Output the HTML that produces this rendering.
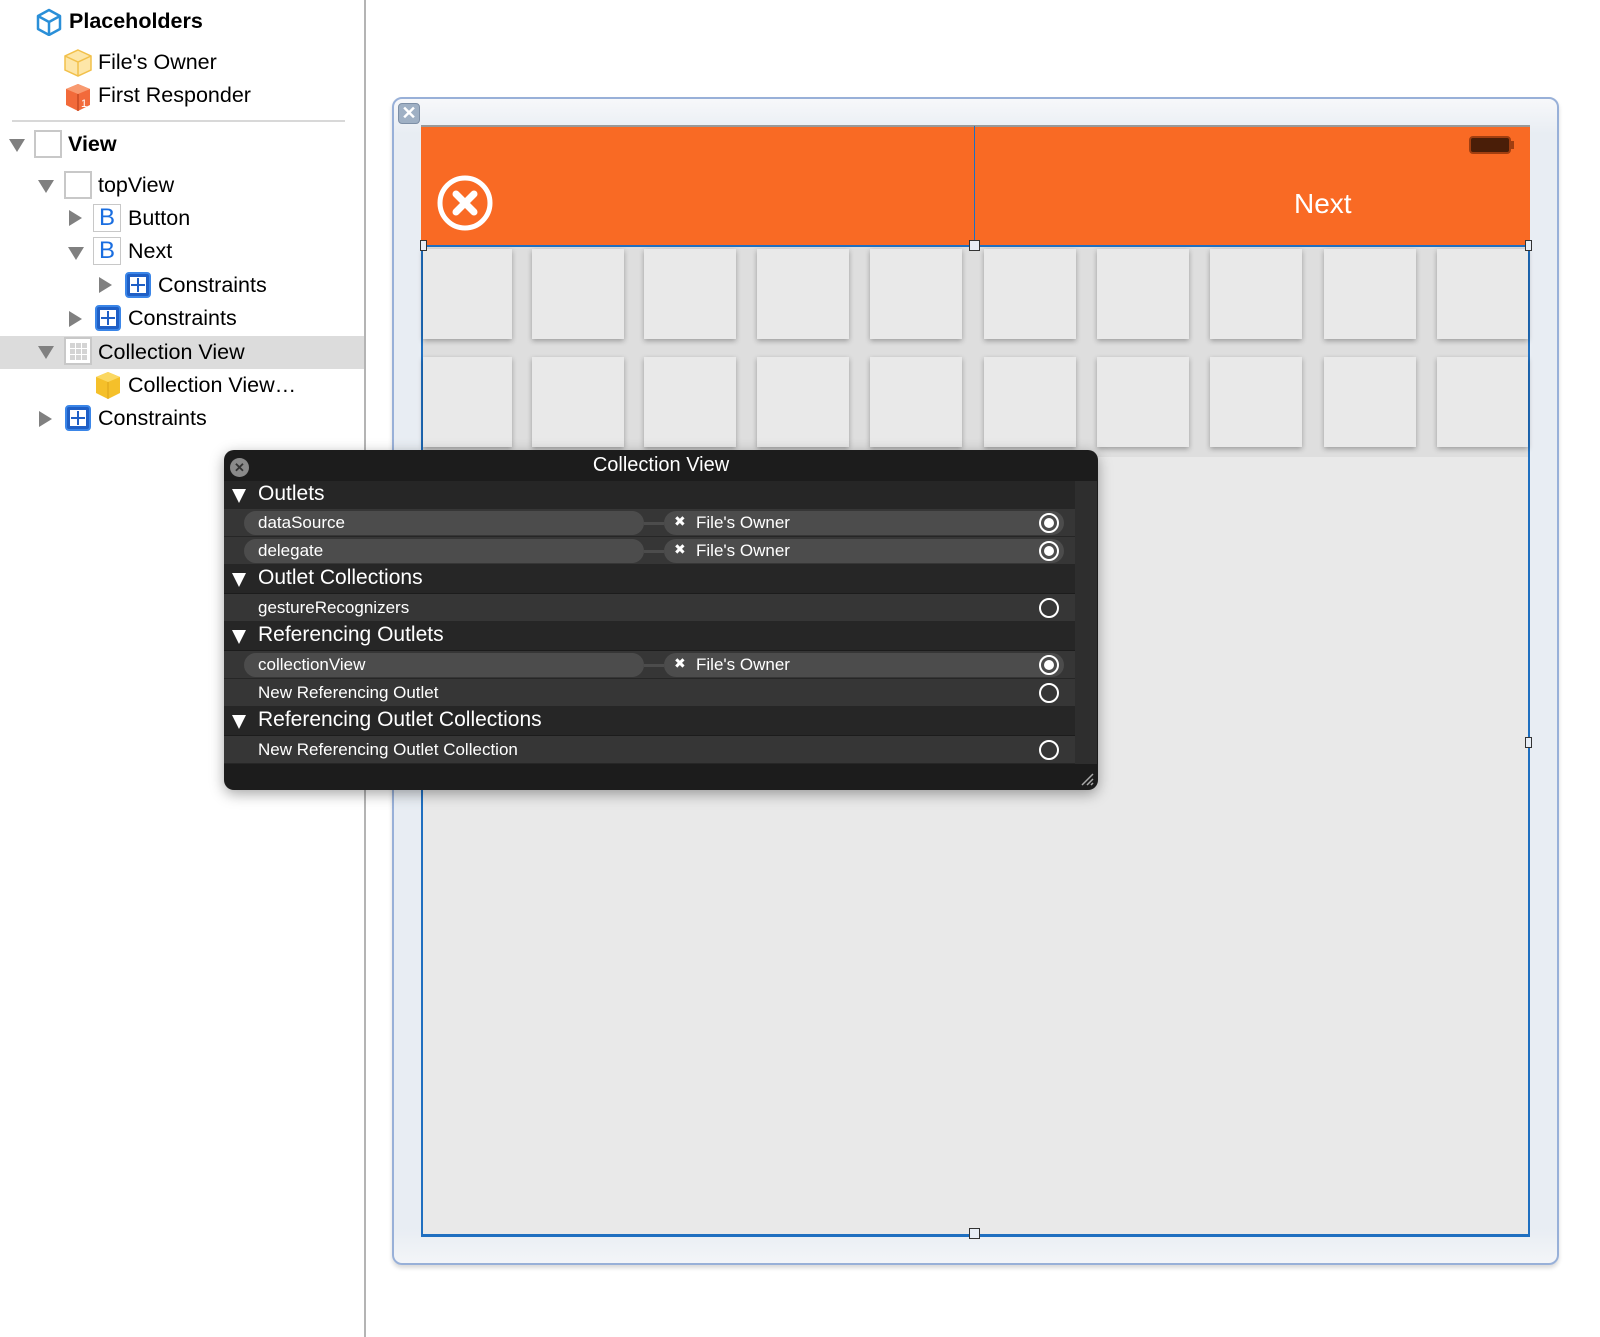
<!DOCTYPE html>
<html><head><meta charset="utf-8"><style>
*{margin:0;padding:0;box-sizing:border-box}
body{width:1600px;height:1337px;background:#fff;position:relative;overflow:hidden;font-family:"Liberation Sans",sans-serif;color:#000}
.a{position:absolute}
.side{font-size:21.5px;white-space:nowrap}
.tri{position:absolute;width:0;height:0}
.td{border-left:8px solid transparent;border-right:8px solid transparent;border-top:13px solid #808080}
.tr{border-top:8px solid transparent;border-bottom:8px solid transparent;border-left:13px solid #808080}
.box{position:absolute;width:28px;height:28px;border:2px solid #c8c8c8;background:#fff}
.bicon{position:absolute;width:28px;height:28px;border:1px solid #c8c8c8;background:#fff;color:#1a6ee0;font-size:24px;line-height:26px;text-align:center}
.cicon{position:absolute;width:26px;height:26px;border-radius:4px;background:#1f5fc6;border:2px solid #3b86e8}
.cicon::before{content:"";position:absolute;left:3px;top:3px;width:16px;height:16px;background:#fff}
.cicon::after{content:"";position:absolute;left:4px;top:4px;width:14px;height:14px;background:linear-gradient(90deg,transparent 6px,#1f5fc6 6px 8px,transparent 8px),linear-gradient(transparent 6px,#1f5fc6 6px 8px,transparent 8px)}
.cell{position:absolute;width:92px;height:90px;background:#e9e9e9;box-shadow:0 2px 5px rgba(0,0,0,.3)}
.pop{position:absolute;left:224px;top:450px;width:874px;height:340px;background:#1c1c1c;border-radius:10px;box-shadow:0 4px 14px rgba(0,0,0,.35);overflow:hidden;color:#fff;font-size:17px}
.row{position:absolute;left:0;width:851px;height:28px;background:#363636;border-bottom:1px solid #262626}
.hdr{position:absolute;left:0;width:851px;height:28px;background:#262626;font-size:21px}
.hdr span{position:absolute;left:34px;top:1px}
.hdr b{position:absolute;left:8px;top:8px;width:0;height:0;border-left:7px solid transparent;border-right:7px solid transparent;border-top:14px solid #fff}
.pill{position:absolute;top:2px;height:24px;border-radius:12px;background:#4c4c4c}
.lbl{position:absolute;left:34px;top:4px}
.circ{position:absolute;left:815px;top:4px;width:20px;height:20px;border-radius:50%;border:2px solid #fff}
.circ.f::after{content:"";position:absolute;left:3px;top:3px;width:10px;height:10px;border-radius:50%;background:#fff}
</style></head><body>
<!-- sidebar -->
<div class="a" style="left:364px;top:0;width:2px;height:1337px;background:#b4b4b4"></div>
<svg class="a" style="left:36px;top:8px" width="26" height="28" viewBox="0 0 26 28"><path d="M13 2 L24 8 L24 21 L13 27 L2 21 L2 8 Z M2 8 L13 14 L24 8 M13 14 L13 27" fill="none" stroke="#2a8fd8" stroke-width="2.5" stroke-linejoin="round"/></svg>
<div class="a side" style="left:69px;top:9px;font-weight:bold">Placeholders</div>
<svg class="a" style="left:63px;top:48px" width="30" height="30" viewBox="0 0 30 30"><path d="M15 2 L28 8 L28 22 L15 28 L2 22 L2 8 Z" fill="#fde6a8" stroke="#f2c04a" stroke-width="1.5"/><path d="M2 8 L15 14 L28 8 M15 14 L15 28" fill="none" stroke="#f2c04a" stroke-width="1.5"/></svg>
<div class="a side" style="left:98px;top:50px">File's Owner</div>
<svg class="a" style="left:64px;top:82px" width="28" height="30" viewBox="0 0 28 30"><path d="M14 2 L26 7 L26 23 L14 29 L2 23 L2 7 Z" fill="#f26a3a"/><path d="M2 7 L14 12 L26 7 L14 2 Z" fill="#f89a70"/><path d="M14 12 L14 29" stroke="#c84a22" stroke-width="1.5"/><text x="17" y="25" font-size="11" fill="#fff" font-family="Liberation Sans">1</text></svg>
<div class="a side" style="left:98px;top:83px">First Responder</div>
<div class="a" style="left:12px;top:120px;width:333px;height:2px;background:#d8d8d8"></div>
<div class="tri td" style="left:9px;top:139px"></div>
<div class="box" style="left:34px;top:130px"></div>
<div class="a side" style="left:68px;top:132px;font-weight:bold">View</div>
<div class="tri td" style="left:38px;top:180px"></div>
<div class="box" style="left:64px;top:171px"></div>
<div class="a side" style="left:98px;top:173px">topView</div>
<div class="tri tr" style="left:69px;top:210px"></div>
<div class="bicon" style="left:93px;top:204px">B</div>
<div class="a side" style="left:128px;top:206px">Button</div>
<div class="tri td" style="left:68px;top:247px"></div>
<div class="bicon" style="left:93px;top:237px">B</div>
<div class="a side" style="left:128px;top:239px">Next</div>
<div class="tri tr" style="left:99px;top:277px"></div>
<div class="cicon" style="left:125px;top:272px"></div>
<div class="a side" style="left:158px;top:273px">Constraints</div>
<div class="tri tr" style="left:69px;top:311px"></div>
<div class="cicon" style="left:95px;top:305px"></div>
<div class="a side" style="left:128px;top:306px">Constraints</div>
<div class="a" style="left:0;top:336px;width:364px;height:33px;background:#dcdcdc"></div>
<div class="tri td" style="left:38px;top:346px"></div>
<div class="box" style="left:64px;top:337px;background:#fff"><div class="a" style="left:4px;top:4px;width:17px;height:17px;background:linear-gradient(90deg,transparent 5px,#fff 5px 6px,transparent 6px 11px,#fff 11px 12px,transparent 12px),linear-gradient(transparent 5px,#fff 5px 6px,transparent 6px 11px,#fff 11px 12px,transparent 12px),#d4d4d4"></div></div>
<div class="a side" style="left:98px;top:340px">Collection View</div>
<svg class="a" style="left:94px;top:370px" width="28" height="30" viewBox="0 0 28 30"><path d="M14 2 L26 7 L26 23 L14 29 L2 23 L2 7 Z" fill="#f5c02a"/><path d="M2 7 L14 12 L26 7 L14 2 Z" fill="#fbd862"/><path d="M14 12 L14 29" stroke="#dca21a" stroke-width="1"/></svg>
<div class="a side" style="left:128px;top:373px">Collection View…</div>
<div class="tri tr" style="left:39px;top:411px"></div>
<div class="cicon" style="left:65px;top:405px"></div>
<div class="a side" style="left:98px;top:406px">Constraints</div>

<!-- canvas frame -->
<div class="a" style="left:392px;top:97px;width:1167px;height:1168px;border:2px solid #98b0d8;border-radius:10px;background:linear-gradient(#f7f8fa,#e8edf3 3%,#e8edf3 97%,#f3f5f8);box-shadow:0 3px 4px rgba(0,0,0,.15)"></div>
<div class="a" style="left:398px;top:103px;width:22px;height:21px;border-radius:4px;background:#9fb0c4;border:1px solid #7d8fa6;color:#fff;font-size:18px;line-height:19px;text-align:center;font-weight:bold">✕</div>
<div class="a" style="left:421px;top:125px;width:1109px;height:1112px;background:#e9e9e9;border-left:2px solid #1f6fc0;border-right:2px solid #1f6fc0;border-bottom:3px solid #1f6fc0"></div>
<div class="a" style="left:423px;top:247px;width:1105px;height:210px;background:#dedede"></div>
<div id="cells"></div>
<div class="a" style="left:421px;top:125px;width:1109px;height:122px;background:#f96a24;border-bottom:2px solid #1f6fc0;border-top:2px solid #999"></div>
<div class="a" style="left:974px;top:126px;width:1px;height:121px;background:#1f6fc0"></div>
<svg class="a" style="left:436px;top:174px" width="58" height="58" viewBox="0 0 58 58"><circle cx="29" cy="29" r="25" fill="none" stroke="#fff" stroke-width="5"/><path d="M20 20 L38 38 M38 20 L20 38" stroke="#fff" stroke-width="7" stroke-linecap="round"/></svg>
<div class="a" style="left:1294px;top:188px;color:#fff;font-size:28px">Next</div>
<div class="a" style="left:1469px;top:136px;width:42px;height:18px;border:2px solid #a03e10;border-radius:4px;background:#4a1e08"></div>
<div class="a" style="left:1511px;top:141px;width:3px;height:8px;background:#a03e10"></div>
<div class="a" style="left:969px;top:240px;width:11px;height:11px;border:1px solid #333;background:#e8eef6"></div>
<div class="a" style="left:420px;top:240px;width:7px;height:11px;border:1px solid #333;background:#e8eef6"></div>
<div class="a" style="left:1525px;top:240px;width:7px;height:11px;border:1px solid #333;background:#e8eef6"></div>
<div class="a" style="left:1525px;top:737px;width:7px;height:11px;border:1px solid #333;background:#e8eef6"></div>
<div class="a" style="left:969px;top:1228px;width:11px;height:11px;border:1px solid #333;background:#e8eef6"></div>

<!-- popup -->
<div class="pop">
 <div class="a" style="left:6px;top:8px;width:19px;height:19px;border-radius:50%;background:#8a8a8a;color:#333;font-size:13px;line-height:19px;text-align:center;font-weight:bold">✕</div>
 <div class="a" style="left:0;width:874px;top:4px;text-align:center;font-size:20px">Collection View</div>
 <div class="a" style="left:851px;top:31px;width:22px;height:283px;background:#2e2e2e"></div>
 <div class="hdr" style="top:31px"><b></b><span>Outlets</span></div>
 <div class="row" style="top:59px"><div class="pill" style="left:20px;width:400px"></div><div class="a" style="left:420px;top:13px;width:20px;height:3px;background:#4c4c4c"></div><div class="pill" style="left:440px;width:400px"></div><div class="lbl">dataSource</div><div class="a" style="left:450px;top:4px;font-size:14px">✖</div><div class="a" style="left:472px;top:4px">File's Owner</div><div class="circ f"></div></div>
 <div class="row" style="top:87px"><div class="pill" style="left:20px;width:400px"></div><div class="a" style="left:420px;top:13px;width:20px;height:3px;background:#4c4c4c"></div><div class="pill" style="left:440px;width:400px"></div><div class="lbl">delegate</div><div class="a" style="left:450px;top:4px;font-size:14px">✖</div><div class="a" style="left:472px;top:4px">File's Owner</div><div class="circ f"></div></div>
 <div class="hdr" style="top:115px"><b></b><span>Outlet Collections</span></div>
 <div class="row" style="top:144px"><div class="lbl">gestureRecognizers</div><div class="circ"></div></div>
 <div class="hdr" style="top:172px"><b></b><span>Referencing Outlets</span></div>
 <div class="row" style="top:201px"><div class="pill" style="left:20px;width:400px"></div><div class="a" style="left:420px;top:13px;width:20px;height:3px;background:#4c4c4c"></div><div class="pill" style="left:440px;width:400px"></div><div class="lbl">collectionView</div><div class="a" style="left:450px;top:4px;font-size:14px">✖</div><div class="a" style="left:472px;top:4px">File's Owner</div><div class="circ f"></div></div>
 <div class="row" style="top:229px"><div class="lbl">New Referencing Outlet</div><div class="circ"></div></div>
 <div class="hdr" style="top:257px"><b></b><span>Referencing Outlet Collections</span></div>
 <div class="row" style="top:286px"><div class="lbl">New Referencing Outlet Collection</div><div class="circ"></div></div>
 <svg class="a" style="left:856px;top:322px" width="14" height="14"><path d="M2 13 L13 2 M7 13 L13 7 M11 13 L13 11" stroke="#aaa" stroke-width="1.5"/></svg>
</div>
<script>
var c=document.getElementById('cells'),h='';
var xs=[400,532,644,757,870,984,1097,1210,1324,1437];
for(var r=0;r<2;r++)for(var i=0;i<10;i++){var x=xs[i],w=92;if(i==0){x=423;w=89;}if(i==9){w=91;}h+='<div class="cell" style="left:'+x+'px;top:'+(r?357:249)+'px;width:'+w+'px"></div>';}
c.innerHTML=h;
</script>
</body></html>
